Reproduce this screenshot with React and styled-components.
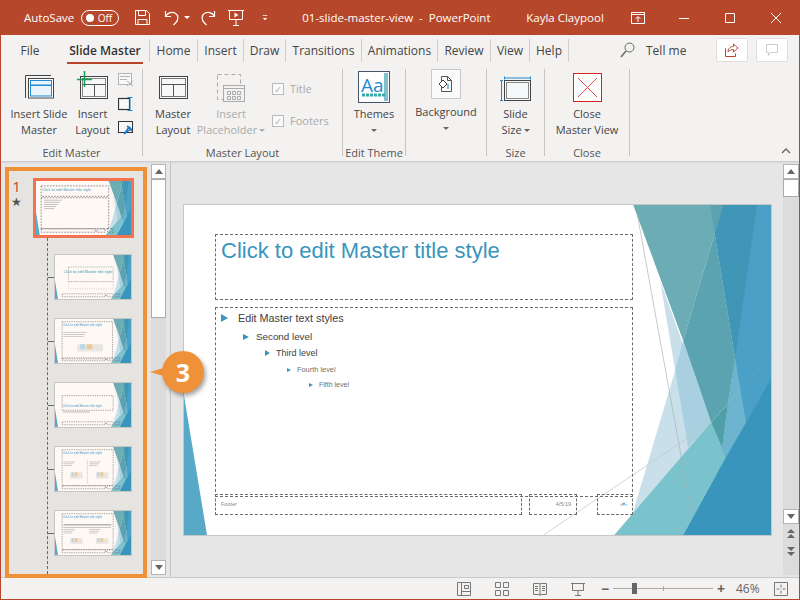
import React from "react";
import styled, { createGlobalStyle } from "styled-components";

const RED = "#b7472a";
const UI_FONT = `"Open Sans", "Noto Sans", sans-serif`;

const GlobalStyle = createGlobalStyle`
  html, body { margin: 0; padding: 0; background: #e6e6e6; }
  * { box-sizing: border-box; }
`;

const Shell = styled.div`
  width: 800px;
  height: 600px;
  display: flex;
  flex-direction: column;
  border: 1px solid ${RED};
  border-top: none;
  overflow: hidden;
  font-family: ${UI_FONT};
  background: #e6e6e6;
`;

/* title bar */
const TitleBar = styled.header`
  height: 35px;
  flex: none;
  margin: 0 -1px;
  background: ${RED};
  color: #fff;
  display: flex;
  align-items: center;
  padding-left: 24px;
  font-size: 11.5px;
`;

const Toggle = styled.div`
  width: 38px;
  height: 16px;
  margin-left: 7px;
  border: 1px solid #fff;
  border-radius: 8px;
  display: flex;
  align-items: center;
  justify-content: space-between;
  padding: 0 6px 0 4px;
  font-size: 10px;
  &::before {
    content: "";
    width: 8px;
    height: 8px;
    border-radius: 50%;
    background: #fff;
  }
`;

const Qat = styled.div`
  display: flex;
  align-items: center;
  margin-left: ${(p) => p.$left || 0}px;
  width: ${(p) => p.$width}px;
  flex: none;
`;

const DocTitle = styled.span`
  width: 224px;
  margin-left: 34px;
  white-space: pre;
  flex: none;
`;

const UserName = styled.span`
  width: 104px;
  flex: none;
`;

/* tabs */
const TabRow = styled.nav`
  height: 33px;
  flex: none;
  background: #f3f2f1;
  display: flex;
  align-items: center;
  padding-bottom: 3px;
  font-size: 12px;
  color: #444;
`;

const Tab = styled.div`
  flex: none;
  width: ${(p) => p.$width}px;
  margin-left: ${(p) => p.$left || 0}px;
  height: 23px;
  line-height: 23px;
  text-align: center;
  white-space: nowrap;
  color: ${(p) => (p.$active ? "#333" : "#444")};
  font-weight: ${(p) => (p.$active ? 600 : 400)};
  box-shadow: ${(p) => (p.$active ? `0 2px 0 ${RED}` : "none")};
  border-right: ${(p) => (p.$sep ? "1px solid #d0cfcd" : "none")};
`;

const TellMe = styled.div`
  display: flex;
  align-items: center;
  gap: 11px;
  margin-left: 51px;
  width: 95px;
  flex: none;
`;

const ActionButton = styled.div`
  width: 32px;
  height: 24px;
  margin-left: ${(p) => p.$left}px;
  flex: none;
  background: #fff;
  border: 1px solid #e1dfdd;
  border-radius: 2px;
  display: flex;
  align-items: center;
  justify-content: center;
`;

/* ribbon */
const Ribbon = styled.section`
  height: 93px;
  flex: none;
  display: flex;
  background: #f3f2f1;
  font-size: 11px;
  color: #444;
  box-shadow: 0 1px 2px #c4c4c4;
  position: relative;
  z-index: 2;
`;

const Group = styled.div`
  width: ${(p) => p.$width}px;
  flex: none;
  display: flex;
  flex-direction: column;
  position: relative;
  &::after {
    content: "";
    position: absolute;
    right: 0;
    top: 1px;
    bottom: 5px;
    width: 1px;
    background: #c6c5c3;
  }
`;

const GroupBody = styled.div`
  height: 77px;
  display: flex;
  align-items: flex-start;
`;

const GroupLabel = styled.div`
  height: 16px;
  line-height: 16px;
  text-align: center;
  font-size: 11px;
  padding-right: 1px;
  white-space: nowrap;
  color: #555;
`;

const Collapse = styled.div`
  position: absolute;
  right: 8px;
  bottom: 4px;
`;

const BigButton = styled.div`
  width: ${(p) => p.$width}px;
  margin-left: ${(p) => p.$left || 0}px;
  flex: none;
  display: flex;
  flex-direction: column;
  align-items: center;
  color: ${(p) => (p.$disabled ? "#aaa" : "#444")};
`;

const IconSlot = styled.div`
  height: ${(p) => p.$height || 38}px;
  padding-top: ${(p) => p.$top}px;
  display: flex;
  align-items: flex-start;
  justify-content: center;
`;

const Line = styled.div`
  height: 16px;
  line-height: 16px;
  white-space: nowrap;
`;

const Caret = styled.span`
  display: inline-block;
  width: 0;
  height: 0;
  margin-left: ${(p) => p.$gap || 0}px;
  vertical-align: 2px;
  border-left: 3px solid transparent;
  border-right: 3px solid transparent;
  border-top: 3px solid ${(p) => p.$color || "#666"};
`;

const SmallStack = styled.div`
  width: 16px;
  margin-left: ${(p) => p.$left || 0}px;
  padding-top: 5px;
  display: flex;
  flex-direction: column;
  gap: 10px;
  flex: none;
`;

const CheckStack = styled.div`
  margin-left: 8px;
  padding-top: 12px;
  display: flex;
  flex-direction: column;
  gap: 15px;
  color: #aaa;
  flex: none;
`;

const CheckRow = styled.div`
  display: flex;
  align-items: center;
  gap: 6px;
  height: 17px;
`;

const Check = styled.span`
  width: 12px;
  height: 12px;
  border: 1px solid #bbb;
  background: #fafafa;
  color: #bbb;
  font-size: 10px;
  line-height: 10px;
  text-align: center;
`;

/* workspace */
const Workspace = styled.main`
  flex: 1;
  min-height: 0;
  display: flex;
  background: #e6e6e6;
`;

const ThumbPane = styled.aside`
  width: 142px;
  flex: none;
  margin: 6px 0 -1px 4px;
  border: 4px solid #ee9138;
  background: #e6e4e0;
  display: flex;
  flex-direction: column;
  position: relative;
  z-index: 1;
`;

const MasterRow = styled.div`
  display: flex;
  height: 67px;
  flex: none;
  padding-top: 7px;
`;

const MasterIndex = styled.div`
  width: 15px;
  margin-right: 9px;
  flex: none;
  display: flex;
  flex-direction: column;
  align-items: center;
  font-size: 15px;
  line-height: 16px;
  color: #c8442c;
`;

const MasterStar = styled.span`
  color: #555;
  font-size: 12px;
  line-height: 10px;
  margin-top: 3px;
`;

const MasterThumb = styled.div`
  width: 101px;
  height: 60px;
  flex: none;
  border: 3px solid #f4734f;
  background: #fef9f5;
`;

const LayoutList = styled.div`
  flex: 1;
  margin-left: 37.5px;
  padding-top: 16px;
  border-left: 1px dashed #666;
  display: flex;
  flex-direction: column;
  gap: 18px;
`;

const LayoutRow = styled.div`
  display: flex;
  align-items: center;
`;

const Tick = styled.span`
  width: 6px;
  flex: none;
  border-top: 1px dashed #666;
`;

const LayoutThumb = styled.div`
  width: 78px;
  height: 46px;
  flex: none;
  border: 1.5px solid #c9c6c1;
  background: #fef9f5;
`;

const Scrollbar = styled.div`
  width: ${(p) => p.$width}px;
  flex: none;
  margin: ${(p) => p.$margin};
  background: #dcdcdc;
  display: flex;
  flex-direction: column;
`;

const ScrollButton = styled.div`
  height: 15px;
  flex: none;
  background: ${(p) => (p.$plain ? "transparent" : "#fff")};
  border: ${(p) => (p.$plain ? "none" : "1px solid #b4b4b4")};
  display: flex;
  align-items: center;
  justify-content: center;
  margin-top: ${(p) => p.$top || 0}px;
`;

const ScrollThumb = styled.div`
  height: ${(p) => p.$height}px;
  flex: none;
  background: #fff;
  border: 1px solid #ababab;
`;

const ScrollSpacer = styled.div`
  flex: ${(p) => (p.$height ? "none" : 1)};
  height: ${(p) => (p.$height ? `${p.$height}px` : "auto")};
`;

const Canvas = styled.div`
  flex: 1;
  min-width: 0;
  margin-left: 4px;
  border-left: 1px solid #c4c4c4;
  padding: 43px 0 0 12px;
`;

const Slide = styled.div`
  width: 589px;
  height: 332px;
  background: #fff;
  border: 1px solid #c6c6c6;
  position: relative;
  padding: 29px 0 0 31px;
  display: flex;
  flex-direction: column;
`;

const SlideArtLayer = styled.svg`
  position: absolute;
  left: 0;
  top: 0;
  width: 100%;
  height: 100%;
`;

const Placeholder = styled.div`
  position: relative;
  border: 1px dashed #6c6c6c;
  width: ${(p) => p.$width}px;
  height: ${(p) => p.$height}px;
  margin-top: ${(p) => p.$top || 0}px;
  margin-left: ${(p) => p.$left || 0}px;
  flex: none;
`;

const MasterTitle = styled.div`
  font-family: "Liberation Sans", Arial, sans-serif;
  font-size: 22px;
  line-height: 28px;
  color: #3a95bb;
  padding: 2px 0 0 5px;
  white-space: nowrap;
`;

const Level = styled.div`
  font-family: "Liberation Sans", Arial, sans-serif;
  white-space: nowrap;
  display: flex;
  align-items: center;
  margin-left: ${(p) => p.$indent}px;
  margin-top: ${(p) => p.$top}px;
  font-size: ${(p) => p.$size}px;
  line-height: 12px;
  gap: ${(p) => p.$gap}px;
  color: ${(p) => p.$color};
`;

const Bullet = styled.span`
  width: 0;
  height: 0;
  flex: none;
  border-left: ${(p) => p.$size}px solid #3a95bb;
  border-top: ${(p) => p.$size * 0.6}px solid transparent;
  border-bottom: ${(p) => p.$size * 0.6}px solid transparent;
`;

const FooterRow = styled.div`
  display: flex;
  margin-top: -3px;
`;

const FooterText = styled.div`
  font-family: "Liberation Sans", Arial, sans-serif;
  font-size: 5.5px;
  line-height: 19px;
  color: ${(p) => p.$color || "#888"};
  padding: 0 ${(p) => p.$right || 0}px 0 5px;
  text-align: ${(p) => p.$align || "left"};
`;

const Callout = styled.div`
  position: absolute;
  left: 150px;
  top: 351px;
  width: 54px;
  height: 42px;
  z-index: 5;
`;

const CalloutDisc = styled.div`
  position: absolute;
  right: 0;
  top: 0;
  width: 42px;
  height: 42px;
  border-radius: 50%;
  background: #ee9138;
  color: #fff;
  font-family: "Open Sans", sans-serif;
  font-weight: 700;
  font-size: 25px;
  line-height: 42px;
  text-align: center;
  box-shadow: 2px 3px 4px rgba(0, 0, 0, 0.35);
`;

const CalloutTail = styled.div`
  position: absolute;
  left: 0;
  top: 14px;
  width: 0;
  height: 0;
  border-right: 24px solid #ee9138;
  border-top: 7px solid transparent;
  border-bottom: 7px solid transparent;
`;

/* status bar */
const StatusBar = styled.footer`
  height: 22px;
  flex: none;
  background: #f3f2f1;
  border-top: 1px solid #c8c8c8;
  display: flex;
  align-items: center;
  font-size: 12px;
  color: #666;
  padding-left: 455px;
`;

const StatusIcon = styled.svg`
  width: 16px;
  height: 16px;
  flex: none;
  margin-right: ${(p) => p.$right}px;
  fill: none;
  stroke: #777;
  stroke-width: 1;
`;

const ZoomTrack = styled.div`
  width: 100px;
  height: 1px;
  margin: 0 4px;
  background: #aaa;
  flex: none;
  position: relative;
  &::before {
    content: "";
    position: absolute;
    left: 19px;
    top: -5px;
    width: 5px;
    height: 11px;
    background: #666;
  }
  &::after {
    content: "";
    position: absolute;
    left: 50px;
    top: -2px;
    width: 1px;
    height: 5px;
    background: #aaa;
  }
`;

const ZoomSign = styled.span`
  font-size: 14px;
  font-weight: 700;
  color: #666;
  width: 8px;
  text-align: center;
  line-height: 16px;
  flex: none;
`;

const ZoomValue = styled.span`
  margin: 0 13px 0 11px;
  width: 24px;
  flex: none;
`;

/* drawings */
const Art = () => (
  <>
    <polygon points="527,0 588,0 588,331 500,331 535,266 539,244 552,153" fill="#4aa0c6" />
    <polygon points="527,0 574,0 552,153" fill="#4096b6" />
    <polygon points="552,153 574,0 539,244" fill="#4096b6" />
    <polygon points="500,331 588,174 588,331" fill="#3a95bd" />
    <polygon points="552,153 563,218 535,266 539,244" fill="#6db5cf" />
    <polygon points="477,76 528,218 443,331 492,166" fill="#c9e0ea" />
    <polygon points="492,166 500,136 528,218 505,243" fill="#a8d0e0" />
    <polygon points="431,331 528,218 539,244 542,254 500,331" fill="#7ac2cc" />
    <polygon points="450,0 540,0 500,136" fill="#6cacb5" />
    <polygon points="527,0 540,0 500,136 528,218 545,199 552,153" fill="#5ba3b0" />
    <polygon points="552,153 545,199 539,244" fill="#5ba3b0" />
    <polygon points="545,199 528,218 539,244" fill="#4f9fa8" />
    <line x1="454" y1="9" x2="509" y2="313" stroke="#a9b0b3" strokeWidth="1" opacity="0.65" />
    <line x1="360" y1="331" x2="528" y2="218" stroke="#c4c6c8" strokeWidth="1" opacity="0.7" />
    <line x1="528" y1="218" x2="588" y2="151" stroke="#b9bcbe" strokeWidth="1" opacity="0.15" />
    <polygon points="0,191 23,331 0,331" fill="#58a8c8" />
  </>
);

const Box = ({ x, y, w, h }) => (
  <rect x={x} y={y} width={w} height={h} fill="none" stroke="#6a6a6a" strokeWidth="4.5" strokeDasharray="10 8" />
);

const Bars = ({ x, y, w, n = 3, gap = 14 }) => (
  <>
    {Array.from({ length: n }).map((_, i) => (
      <rect key={i} x={x} y={y + i * gap} width={w - i * 12} height="5" fill="#b5b5b5" />
    ))}
  </>
);

const Content = ({ x, y, w, h }) => (
  <>
    <Bars x={x} y={y} w={w * 0.5} />
    <rect x={x + w * 0.3} y={y + h * 0.5} width={w * 0.55} height={h * 0.3} fill="#e9e6e2" />
    <rect x={x + w * 0.5} y={y + h * 0.5} width={w * 0.12} height={h * 0.2} fill="#f0c894" />
    <rect x={x + w * 0.36} y={y + h * 0.5} width={w * 0.1} height={h * 0.2} fill="#b8d7e4" />
  </>
);

const FootBoxes = ({ x = 32 }) => (
  <>
    <Box x={x} y={292} w={335} h={22} />
    <Box x={x + 345} y={292} w={50} h={22} />
    <Box x={x + 410} y={292} w={35} h={22} />
  </>
);

const TITLE_TEXT = "Click to edit Master title style";

const ThumbTitle = ({ x = 90, y = 60, size = 24, anchor = "start" }) => (
  <text x={x} y={y} fontSize={size} fill="#3a95bb" fontFamily="Liberation Sans, sans-serif" textAnchor={anchor}>
    {TITLE_TEXT}
  </text>
);

const ThumbArt = ({ kind }) => (
  <svg width="100%" height="100%" viewBox="0 0 588 331" preserveAspectRatio="none" style={{ display: "block" }}>
    <Art />
    {kind === "master" && (
      <>
        <Box x={32} y={30} w={418} h={64} />
        <Box x={32} y={103} w={418} h={190} />
        <FootBoxes />
        <ThumbTitle x={38} y={62} />
        <Bars x={50} y={115} w={110} n={5} gap={13} />
      </>
    )}
    {kind === "title" && (
      <>
        <rect x={105} y={90} width={345} height={110} fill="none" stroke="#888" strokeWidth="4.5" strokeDasharray="10 8" />
        <rect x={105} y={200} width={345} height={55} fill="none" stroke="#bbb" strokeWidth="4" strokeDasharray="10 8" />
        <ThumbTitle x={445} y={135} anchor="end" size={30} />
        <FootBoxes x={55} />
      </>
    )}
    {kind === "content" && (
      <>
        <Box x={55} y={20} w={390} h={280} />
        <ThumbTitle x={60} y={55} />
        <Content x={65} y={100} w={360} h={180} />
        <FootBoxes x={55} />
      </>
    )}
    {kind === "section" && (
      <>
        <Box x={55} y={95} w={395} h={110} />
        <ThumbTitle x={60} y={180} />
        <rect x={60} y={215} width={210} height={6} fill="#aaa" />
        <FootBoxes x={55} />
      </>
    )}
    {kind === "two" && (
      <>
        <Box x={55} y={20} w={395} h={270} />
        <line x1="250" y1="100" x2="250" y2="280" stroke="#999" strokeWidth="4" strokeDasharray="10 8" />
        <ThumbTitle x={60} y={55} />
        <Content x={65} y={110} w={175} h={160} />
        <Content x={265} y={110} w={175} h={160} />
        <FootBoxes x={55} />
      </>
    )}
    {kind === "compare" && (
      <>
        <Box x={55} y={20} w={395} h={270} />
        <ThumbTitle x={60} y={55} />
        <rect x={65} y={100} width={370} height={8} fill="#999" />
        <rect x={65} y={120} width={370} height={6} fill="#bbb" />
        <Content x={65} y={135} w={175} h={140} />
        <Content x={265} y={135} w={175} h={140} />
        <FootBoxes x={55} />
      </>
    )}
  </svg>
);

const W = "#fff";

const SaveIcon = () => (
  <svg width="17" height="17" viewBox="0 0 17 17" fill="none" stroke={W}>
    <path d="M1.5 1.5h11l3 3v11h-14z M4.5 1.5v5h7v-5 M4 15.5v-5h9v5" />
  </svg>
);

const UndoIcon = () => (
  <svg width="17" height="17" viewBox="0 0 17 17" fill="none" stroke={W} strokeWidth="1.2">
    <path d="M1.5 2v5.5H7 M1.8 7C4 3.5 8 2.5 11 4c3.5 2 4 6.5.5 10l-2 2" />
  </svg>
);

const RedoIcon = () => (
  <svg width="17" height="17" viewBox="0 0 17 17" fill="none" stroke={W} strokeWidth="1.2">
    <path d="M15.5 2v5.5H10 M15.2 7C13 3.5 9 2.5 6 4 2.5 6 2 10.5 5.5 14l2 2" />
  </svg>
);

const PresentIcon = () => (
  <svg width="18" height="18" viewBox="0 0 18 18" fill="none" stroke={W}>
    <path d="M1 1.500h16M2.500 1.500v9h13v-9M9 10.500v6M6 16.500h6" />
    <path d="M7.500 3.500l4 2.500-4 2.500z" fill={W} stroke="none" />
  </svg>
);

const QatMore = () => (
  <svg width="8" height="10" viewBox="0 0 8 10" fill={W}>
    <rect x="1" y="1" width="6" height="1" />
    <path d="M1 5h6l-3 3z" />
  </svg>
);

const WindowIcon = ({ kind }) => (
  <svg width="16" height="14" viewBox="0 0 16 14" fill="none" stroke={W}>
    {kind === "display" && <path d="M1.500 1.500h13v11h-13z M1.500 3.500h13 M8 11V6 M5.500 8L8 5.500 10.500 8" />}
    {kind === "min" && <path d="M3 7.500h10" />}
    {kind === "max" && <path d="M3.500 2.500h9v9h-9z" />}
    {kind === "close" && <path d="M3 2l10 10M13 2L3 12" />}
  </svg>
);

const SearchIcon = () => (
  <svg width="15" height="16" viewBox="0 0 15 16" fill="none" stroke="#666">
    <circle cx="9.500" cy="5.500" r="4.500" />
    <path d="M6 9l-5 6" strokeWidth="1.400" />
  </svg>
);

const ShareIcon = () => (
  <svg width="14" height="14" viewBox="0 0 14 14" fill="none" stroke={RED}>
    <path d="M.5 5.500v8h10v-3" />
    <path d="M3 9c0-4 3-5.500 5.500-5.500V1L13 5l-4.500 4V6.500C6 6.500 4 7.500 3 9z" />
  </svg>
);

const CommentIcon = () => (
  <svg width="14" height="14" viewBox="0 0 14 14" fill="none" stroke="#ccc">
    <path d="M1.500 1.500h11v8h-7l-2 3v-3h-2z" />
  </svg>
);

const InsertMasterIcon = () => (
  <svg width="30" height="25" viewBox="0 0 30 25" fill="none">
    <path d="M1.500 24V1.500H27" stroke="#444" />
    <rect x="4.500" y="4.500" width="25" height="19.500" stroke="#444" fill="#fff" />
    <rect x="6.500" y="6.500" width="21" height="4.500" stroke="#1f8ad0" fill="#eaf4fb" />
    <rect x="6.500" y="11.500" width="21" height="10.500" stroke="#1f8ad0" fill="#eaf4fb" />
  </svg>
);

const InsertLayoutIcon = () => (
  <svg width="32" height="29" viewBox="0 0 32 29" fill="none">
    <rect x="3.500" y="5.500" width="27" height="22" stroke="#444" fill="#f8f8f8" />
    <rect x="5.500" y="7.500" width="23" height="18" stroke="#888" />
    <path d="M5.500 13.500h23M17.500 13.500v12" stroke="#555" />
    <path d="M7.500 0v16M0 8.500h15" stroke="#14a050" strokeWidth="1.500" />
  </svg>
);

const MasterLayoutIcon = () => (
  <svg width="29" height="23" viewBox="0 0 29 23" fill="none">
    <rect x=".5" y=".5" width="28" height="22" stroke="#444" fill="#f8f8f8" />
    <rect x="2.500" y="2.500" width="24" height="18" stroke="#777" />
    <path d="M2.500 8.500h24M14.500 8.500v12" stroke="#555" />
  </svg>
);

const PlaceholderIcon = () => (
  <svg width="30" height="30" viewBox="0 0 30 30" fill="none" stroke="#aaa">
    <rect x="1.500" y="1.500" width="23" height="25" strokeDasharray="4 3" />
    <rect x="7.500" y="12.500" width="21" height="16" fill="#f3f2f1" />
    <path d="M8 15.500h20" />
    <path d="M11.500 18.500h3v3h-3zM16.500 18.500h3v3h-3zM21.500 18.500h3v3h-3zM11.500 23.500h3v3h-3zM16.500 23.500h3v3h-3zM21.500 23.500h3v3h-3z" />
  </svg>
);

const ThemesIcon = () => (
  <svg width="32" height="32" viewBox="0 0 32 32">
    <rect x=".5" y=".5" width="31" height="31" fill="#fff" stroke="#44546a" />
    <rect x="26" y="2" width="4" height="28" fill="#7fc0cc" />
    <text x="3" y="21" fontSize="19" fill="#1f8ad0" fontFamily="Open Sans, sans-serif">Aa</text>
    <path d="M4 24h24" stroke="#3aa6a6" strokeWidth="3" strokeDasharray="3 1" />
  </svg>
);

const BackgroundIcon = () => (
  <svg width="30" height="30" viewBox="0 0 30 30" fill="none">
    <rect x=".5" y=".5" width="29" height="29" fill="#fafafa" stroke="#c8c8c8" />
    <path d="M10.500 7.500h6l4 4v11h-10z" stroke="#555" />
    <path d="M16.500 7.500v4h4" stroke="#555" />
    <path d="M12 11l-4 4 4 4 4-4z" fill="#fff" stroke="#444" />
    <path d="M17 15v5" stroke="#5aa8d8" strokeWidth="1.500" />
  </svg>
);

const SlideSizeIcon = () => (
  <svg width="31" height="25" viewBox="0 0 31 25" fill="none">
    <path d="M4.500 .5v3M30.500 .5v3M4.500 2h26" stroke="#1f8ad0" />
    <path d="M1.500 4.500v20M0 4.500h3M0 24.500h3" stroke="#1f8ad0" />
    <rect x="4.500" y="4.500" width="26" height="20" stroke="#444" fill="#f4f9f9" />
    <rect x="6.500" y="6.500" width="22" height="16" stroke="#888" />
  </svg>
);

const CloseViewIcon = () => (
  <svg width="29" height="29" viewBox="0 0 29 29" fill="none">
    <rect x=".5" y=".5" width="28" height="28" stroke="#d6231f" fill="#fff" />
    <path d="M5 5l19 19M24 5L5 24" stroke="#e2504c" />
  </svg>
);

const DeleteSmall = () => (
  <svg width="16" height="14" viewBox="0 0 16 14" fill="none" stroke="#b4b4b4">
    <rect x=".5" y=".5" width="13" height="11" fill="#f8f8f8" />
    <path d="M2 3.500h10M2 6.500h7M9 8l6 5M15 8l-6 5" />
  </svg>
);

const RenameSmall = () => (
  <svg width="16" height="14" viewBox="0 0 16 14" fill="none">
    <rect x=".5" y="1.500" width="11" height="11" stroke="#333" fill="#f8f8f8" strokeWidth="1.200" />
    <path d="M9.500 .5h5M12 .5v13M9.500 13.500h5" stroke="#1f8ad0" />
  </svg>
);

const PreserveSmall = () => (
  <svg width="16" height="14" viewBox="0 0 16 14" fill="none">
    <rect x=".5" y=".5" width="14" height="11" stroke="#333" fill="#f8f8f8" />
    <path d="M6 13l3-4 2-3 2 2-3 2-4 3M9 5l5 5" stroke="#1f78c8" strokeWidth="1.500" />
  </svg>
);

const Arrow = ({ up }) => (
  <svg width="8" height="5" viewBox="0 0 8 5" fill="#666">
    <path d={up ? "M0 5h8L4 0z" : "M0 0h8L4 5z"} />
  </svg>
);

const DoubleArrow = ({ up }) => (
  <svg width="8" height="9" viewBox="0 0 8 9" fill="#666">
    <path d={up ? "M0 4h8L4 0zM0 9h8L4 5z" : "M0 0h8L4 4zM0 5h8L4 9z"} />
  </svg>
);

const Chevron = () => (
  <svg width="10" height="6" viewBox="0 0 10 6" fill="none" stroke="#666" strokeWidth="1.300">
    <path d="M1 5l4-4 4 4" />
  </svg>
);

const TABS = [
  ["Home", 48],
  ["Insert", 46],
  ["Draw", 42],
  ["Transitions", 76],
  ["Animations", 76],
  ["Review", 53],
  ["View", 39],
  ["Help", 39],
];

const LAYOUTS = ["title", "content", "section", "two", "compare"];

const LEVELS = [
  { text: "Edit Master text styles", indent: 5, top: 4, size: 10.8, bullet: 7, gap: 10, color: "#404040" },
  { text: "Second level", indent: 27, top: 7, size: 9.8, bullet: 6, gap: 7, color: "#404040" },
  { text: "Third level", indent: 49, top: 4, size: 9, bullet: 5, gap: 6, color: "#404040" },
  { text: "Fourth level", indent: 71, top: 5, size: 7.4, bullet: 4, gap: 6, color: "#707070" },
  { text: "Fifth level", indent: 93, top: 3, size: 7, bullet: 4, gap: 6, color: "#707070" },
];

const App = () => (
  <>
    <GlobalStyle />
    <Shell>
      <TitleBar>
        <span>AutoSave</span>
        <Toggle>Off</Toggle>
        <Qat $left={15} $width={30}><SaveIcon /></Qat>
        <Qat $width={35}>
          <UndoIcon />
          <Caret $gap={3} $color="#fff" />
        </Qat>
        <Qat $width={28}><RedoIcon /></Qat>
        <Qat $width={35}><PresentIcon /></Qat>
        <Qat $width={6}><QatMore /></Qat>
        <DocTitle>01-slide-master-view  -  PowerPoint</DocTitle>
        <UserName>Kayla Claypool</UserName>
        <Qat $width={46}><WindowIcon kind="display" /></Qat>
        <Qat $width={46}><WindowIcon kind="min" /></Qat>
        <Qat $width={46}><WindowIcon kind="max" /></Qat>
        <Qat $width={16}><WindowIcon kind="close" /></Qat>
      </TitleBar>

      <TabRow>
        <Tab $width={20} $left={19}>File</Tab>
        <Tab $width={76} $left={27} $active>Slide Master</Tab>
        <Tab $width={7} $sep />
        {TABS.map(([name, width]) => (
          <Tab key={name} $width={width} $sep>{name}</Tab>
        ))}
        <TellMe>
          <SearchIcon />
          <span>Tell me</span>
        </TellMe>
        <ActionButton $left={1}><ShareIcon /></ActionButton>
        <ActionButton $left={8}><CommentIcon /></ActionButton>
      </TabRow>

      <Ribbon>
        <Group $width={142}>
          <GroupBody>
            <BigButton $width={64} $left={6}>
              <IconSlot $top={6}><InsertMasterIcon /></IconSlot>
              <Line>Insert Slide</Line>
              <Line>Master</Line>
            </BigButton>
            <BigButton $width={43}>
              <IconSlot $top={3}><InsertLayoutIcon /></IconSlot>
              <Line>Insert</Line>
              <Line>Layout</Line>
            </BigButton>
            <SmallStack $left={4}>
              <DeleteSmall />
              <RenameSmall />
              <PreserveSmall />
            </SmallStack>
          </GroupBody>
          <GroupLabel>Edit Master</GroupLabel>
        </Group>

        <Group $width={200}>
          <GroupBody>
            <BigButton $width={50} $left={5}>
              <IconSlot $top={8}><MasterLayoutIcon /></IconSlot>
              <Line>Master</Line>
              <Line>Layout</Line>
            </BigButton>
            <BigButton $width={66} $disabled>
              <IconSlot $top={5}><PlaceholderIcon /></IconSlot>
              <Line>Insert</Line>
              <Line>Placeholder<Caret $gap={2} $color="#aaa" /></Line>
            </BigButton>
            <CheckStack>
              <CheckRow><Check>✓</Check>Title</CheckRow>
              <CheckRow><Check>✓</Check>Footers</CheckRow>
            </CheckStack>
          </GroupBody>
          <GroupLabel>Master Layout</GroupLabel>
        </Group>

        <Group $width={63}>
          <GroupBody>
            <BigButton $width={62}>
              <IconSlot $top={3}><ThemesIcon /></IconSlot>
              <Line>Themes</Line>
              <Line><Caret /></Line>
            </BigButton>
          </GroupBody>
          <GroupLabel>Edit Theme</GroupLabel>
        </Group>

        <Group $width={81}>
          <GroupBody>
            <BigButton $width={80}>
              <IconSlot $height={36} $top={1}><BackgroundIcon /></IconSlot>
              <Line>Background</Line>
              <Line><Caret /></Line>
            </BigButton>
          </GroupBody>
          <GroupLabel />
        </Group>

        <Group $width={58}>
          <GroupBody>
            <BigButton $width={57}>
              <IconSlot $top={8}><SlideSizeIcon /></IconSlot>
              <Line>Slide</Line>
              <Line>Size<Caret $gap={2} /></Line>
            </BigButton>
          </GroupBody>
          <GroupLabel>Size</GroupLabel>
        </Group>

        <Group $width={85}>
          <GroupBody>
            <BigButton $width={84}>
              <IconSlot $top={5}><CloseViewIcon /></IconSlot>
              <Line>Close</Line>
              <Line>Master View</Line>
            </BigButton>
          </GroupBody>
          <GroupLabel>Close</GroupLabel>
        </Group>
        <Collapse><Chevron /></Collapse>
      </Ribbon>

      <Workspace>
        <ThumbPane>
          <MasterRow>
            <MasterIndex>
              1
              <MasterStar>★</MasterStar>
            </MasterIndex>
            <MasterThumb><ThumbArt kind="master" /></MasterThumb>
          </MasterRow>
          <LayoutList>
            {LAYOUTS.map((kind) => (
              <LayoutRow key={kind}>
                <Tick />
                <LayoutThumb><ThumbArt kind={kind} /></LayoutThumb>
              </LayoutRow>
            ))}
          </LayoutList>
        </ThumbPane>

        <Scrollbar $width={15} $margin="3px 0 2px 4px">
          <ScrollButton><Arrow up /></ScrollButton>
          <ScrollThumb $height={139} />
          <ScrollSpacer />
          <ScrollButton><Arrow /></ScrollButton>
        </Scrollbar>

        <Canvas>
          <Slide>
            <SlideArtLayer viewBox="0 0 588 331" preserveAspectRatio="none"><Art /></SlideArtLayer>
            <Placeholder $width={418} $height={66}>
              <MasterTitle>{TITLE_TEXT}</MasterTitle>
            </Placeholder>
            <Placeholder $width={418} $height={190} $top={7}>
              {LEVELS.map((l) => (
                <Level key={l.text} $indent={l.indent} $top={l.top} $size={l.size} $gap={l.gap} $color={l.color}>
                  <Bullet $size={l.bullet} />
                  {l.text}
                </Level>
              ))}
            </Placeholder>
            <FooterRow>
              <Placeholder $width={307} $height={21}><FooterText>Footer</FooterText></Placeholder>
              <Placeholder $width={48} $height={21} $left={7}>
                <FooterText $align="right" $right={5}>4/5/19</FooterText>
              </Placeholder>
              <Placeholder $width={36} $height={21} $left={20}>
                <FooterText $align="right" $right={5} $color="#3a95bb">‹#›</FooterText>
              </Placeholder>
            </FooterRow>
          </Slide>
        </Canvas>

        <Scrollbar $width={16} $margin="3px 0 2px 0">
          <ScrollButton><Arrow up /></ScrollButton>
          <ScrollThumb $height={18} />
          <ScrollSpacer />
          <ScrollButton><Arrow /></ScrollButton>
          <ScrollButton $plain $top={2}><DoubleArrow up /></ScrollButton>
          <ScrollButton $plain $top={3}><DoubleArrow /></ScrollButton>
          <ScrollSpacer $height={16} />
        </Scrollbar>
      </Workspace>

      <Callout>
        <CalloutTail />
        <CalloutDisc>3</CalloutDisc>
      </Callout>

      <StatusBar>
        <StatusIcon $right={22} viewBox="0 0 16 16">
          <path d="M1.500 1.500h13v13h-13z M5.500 1.500v13 M5.500 10.500h9 M8.500 4.500h4v3h-4z" />
        </StatusIcon>
        <StatusIcon $right={22} viewBox="0 0 16 16">
          <path d="M1.500 1.500h5v5h-5z M9.500 1.500h5v5h-5z M1.500 9.500h5v5h-5z M9.500 9.500h5v5h-5z" />
        </StatusIcon>
        <StatusIcon $right={22} viewBox="0 0 16 16">
          <path d="M1.500 2.500h6l.5 1 .5-1h6v11h-6l-.5 1-.5-1h-6z M8 3.500v10 M3 5.500h3 M3 7.500h3 M3 9.500h3 M10 5.500h3 M10 7.500h3 M10 9.500h3" />
        </StatusIcon>
        <StatusIcon $right={15} viewBox="0 0 16 16">
          <path d="M1 2.500h14 M2.500 2.500v7h11v-7 M8 9.500v5 M5 14.500h6" />
        </StatusIcon>
        <ZoomSign>−</ZoomSign>
        <ZoomTrack />
        <ZoomSign>+</ZoomSign>
        <ZoomValue>46%</ZoomValue>
        <StatusIcon $right={0} viewBox="0 0 16 16">
          <path d="M1.500 1.500h13v13h-13z M8 3.500v3 M8 9.500v3 M3.500 8h3 M9.500 8h3" />
        </StatusIcon>
      </StatusBar>
    </Shell>
  </>
);

export default App;
